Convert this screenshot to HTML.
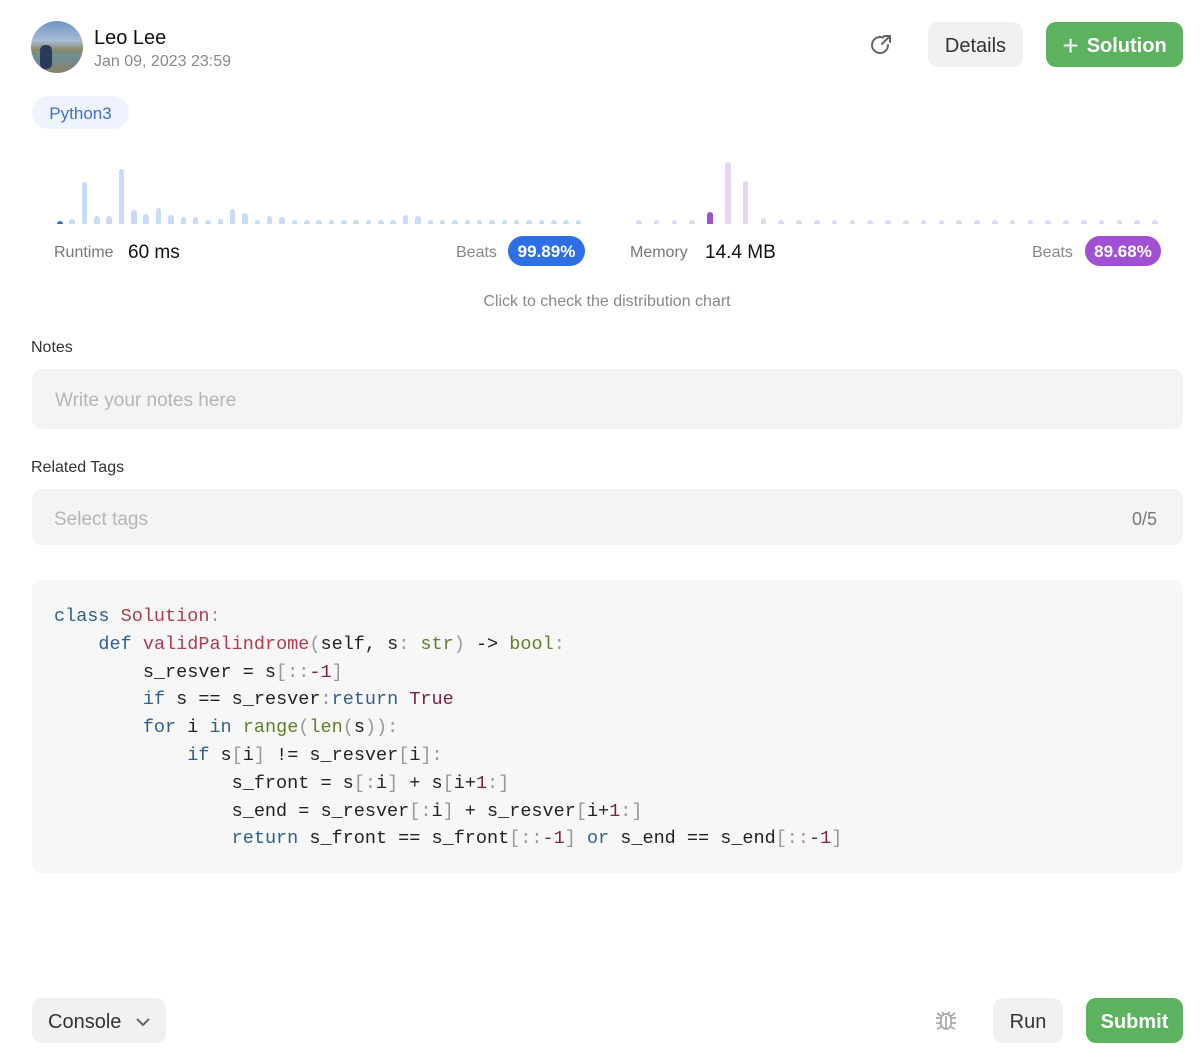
<!DOCTYPE html>
<html><head><meta charset="utf-8">
<style>
*{box-sizing:border-box;margin:0;padding:0}
body{width:1200px;height:1052px;background:#fff;font-family:"Liberation Sans",sans-serif;position:relative;overflow:hidden;color:#262626}
.a{position:absolute;white-space:nowrap}
.btn{position:absolute;border-radius:10px;display:flex;align-items:center;justify-content:center;font-size:20px}
.gray{background:#f1f1f3;color:#333}
.green{background:#5cb25f;color:#fff;font-weight:bold}
.bar{position:absolute;width:5.5px;border-radius:3px 3px 0 0}
.box{position:absolute;left:32px;width:1151px;background:#f4f4f5;border-radius:10px}
pre{position:absolute;left:54px;top:603px;font-family:"Liberation Mono","DejaVu Sans Mono",monospace;font-size:18.5px;line-height:27.8px;color:#222}
.k{color:#2f5f8f}.f{color:#b03a4e}.t{color:#5f7f2a}.p{color:#999}.n{color:#7a1f4a}
</style></head><body>
<div class="a" style="left:31px;top:21px;width:52px;height:52px;border-radius:50%;background:linear-gradient(180deg,#6f94c4 0%,#a8bcd6 38%,#8a8a6a 55%,#6d8f95 70%,#8c7f68 100%)"></div>
<div class="a" style="left:40px;top:45px;width:12px;height:24px;background:#2a3a5a;border-radius:5px"></div>
<div class="a" style="left:94px;top:27px;font-size:20px;color:#111">Leo Lee</div>
<div class="a" style="left:94px;top:53px;font-size:16px;color:#8a8a8a">Jan 09, 2023 23:59</div>
<svg class="a" style="left:869px;top:33px" width="24" height="24" viewBox="0 0 24 24" fill="none" stroke="#666" stroke-width="2" stroke-linecap="round"><path d="M19 12a8 8 0 1 1-5-7.4"/><path d="M13 11l8-8M15 3h6v6"/></svg>
<div class="btn gray" style="left:928px;top:22px;width:95px;height:45px;padding-top:3px">Details</div>
<div class="btn green" style="left:1046px;top:22px;width:137px;height:45px;padding-top:3px"><span style="font-weight:normal;font-size:28px;margin-right:8px;line-height:1">+</span>Solution</div>
<div class="a" style="left:32px;top:96px;width:97px;height:33px;border-radius:17px;background:#eef3fd;color:#3d6fcf;font-size:17px;display:flex;align-items:center;justify-content:center;padding-top:2px">Python3</div>
<div id="bars"></div>
<div class="a" style="left:54px;top:244px;font-size:16px;color:#777">Runtime</div>
<div class="a" style="left:128px;top:242px;font-size:19px;color:#111">60 ms</div>
<div class="a" style="left:456px;top:244px;font-size:16px;color:#888">Beats</div>
<div class="a" style="left:508px;top:236px;width:77px;height:30px;border-radius:15px;background:#2f6fe6;color:#fff;font-size:17px;font-weight:bold;display:flex;align-items:center;justify-content:center;padding-top:2px">99.89%</div>
<div class="a" style="left:630px;top:244px;font-size:16px;color:#777">Memory</div>
<div class="a" style="left:705px;top:242px;font-size:19px;color:#111">14.4 MB</div>
<div class="a" style="left:1032px;top:244px;font-size:16px;color:#888">Beats</div>
<div class="a" style="left:1085px;top:236px;width:76px;height:30px;border-radius:15px;background:#a050d2;color:#fff;font-size:17px;font-weight:bold;display:flex;align-items:center;justify-content:center;padding-top:2px">89.68%</div>
<div class="a" style="left:0;width:1214px;text-align:center;top:293px;font-size:16px;color:#888">Click to check the distribution chart</div>
<div class="a" style="left:31px;top:339px;font-size:16px;color:#333">Notes</div>
<div class="box" style="top:369px;height:60px"></div>
<div class="a" style="left:55px;top:390px;font-size:19px;color:#b5b5b5">Write your notes here</div>
<div class="a" style="left:31px;top:459px;font-size:16px;color:#333">Related Tags</div>
<div class="box" style="top:489px;height:56px"></div>
<div class="a" style="left:54px;top:509px;font-size:19px;color:#b5b5b5">Select tags</div>
<div class="a" style="left:1132px;top:509px;font-size:18px;color:#777">0/5</div>
<div class="box" style="top:580px;height:293px;background:#f7f7f8"></div>
<pre><span class="k">class</span> <span class="f">Solution</span><span class="p">:</span>
    <span class="k">def</span> <span class="f">validPalindrome</span><span class="p">(</span>self, s<span class="p">:</span> <span class="t">str</span><span class="p">)</span> -&gt; <span class="t">bool</span><span class="p">:</span>
        s_resver = s<span class="p">[::</span><span class="n">-1</span><span class="p">]</span>
        <span class="k">if</span> s == s_resver<span class="p">:</span><span class="k">return</span> <span class="n">True</span>
        <span class="k">for</span> i <span class="k">in</span> <span class="t">range</span><span class="p">(</span><span class="t">len</span><span class="p">(</span>s<span class="p">)):</span>
            <span class="k">if</span> s<span class="p">[</span>i<span class="p">]</span> != s_resver<span class="p">[</span>i<span class="p">]:</span>
                s_front = s<span class="p">[:</span>i<span class="p">]</span> + s<span class="p">[</span>i+<span class="n">1</span><span class="p">:]</span>
                s_end = s_resver<span class="p">[:</span>i<span class="p">]</span> + s_resver<span class="p">[</span>i+<span class="n">1</span><span class="p">:]</span>
                <span class="k">return</span> s_front == s_front<span class="p">[::</span><span class="n">-1</span><span class="p">]</span> <span class="k">or</span> s_end == s_end<span class="p">[::</span><span class="n">-1</span><span class="p">]</span></pre>
<div class="btn gray" style="left:32px;top:998px;width:134px;height:45px;justify-content:flex-start;padding-left:16px;padding-top:3px">Console<svg style="margin-left:14px" width="16" height="10" viewBox="0 0 16 10" fill="none" stroke="#666" stroke-width="2"><path d="M2 2l6 6 6-6"/></svg></div>
<svg class="a" style="left:933px;top:1007px" width="26" height="26" viewBox="0 0 26 26" fill="none" stroke="#aaa" stroke-width="1.8"><rect x="8" y="7" width="10" height="15" rx="5"/><path d="M13 9v13M9 5l2 2M17 5l-2 2M3 11h5M18 11h5M3 16h5M18 16h5M4 22l4-2M22 22l-4-2M4 6l4 3M22 6l-4 3"/></svg>
<div class="btn gray" style="left:993px;top:998px;width:70px;height:45px;padding-top:3px">Run</div>
<div class="btn green" style="left:1086px;top:998px;width:97px;height:45px;padding-top:3px">Submit</div>
<script>
var b=document.getElementById('bars'),h='';
var r=[3,5,42,8,8,55,14,10,16,9,7,7,4,5,15,11,4,8,7,4,4,4,4,4,4,4,4,4,9,8,4,4,4,4,4,4,4,4,4,4,4,4,4];
for(var i=0;i<r.length;i++){var x=57+i*12.35;h+='<div class="bar" style="left:'+x+'px;top:'+(224-r[i])+'px;height:'+r[i]+'px;background:'+(i==0?'#2f6fe6':'#c9dcf7')+'"></div>';}
var m=[4,4,4,4,12,62,43,6];
for(var i=0;i<30;i++){var hh=m[i]||4;var x=636+i*17.8;h+='<div class="bar" style="left:'+x+'px;top:'+(224-hh)+'px;height:'+hh+'px;background:'+(i==4?'#a050d2':'#e6d6f3')+'"></div>';}
b.innerHTML=h;
</script>
</body></html>
